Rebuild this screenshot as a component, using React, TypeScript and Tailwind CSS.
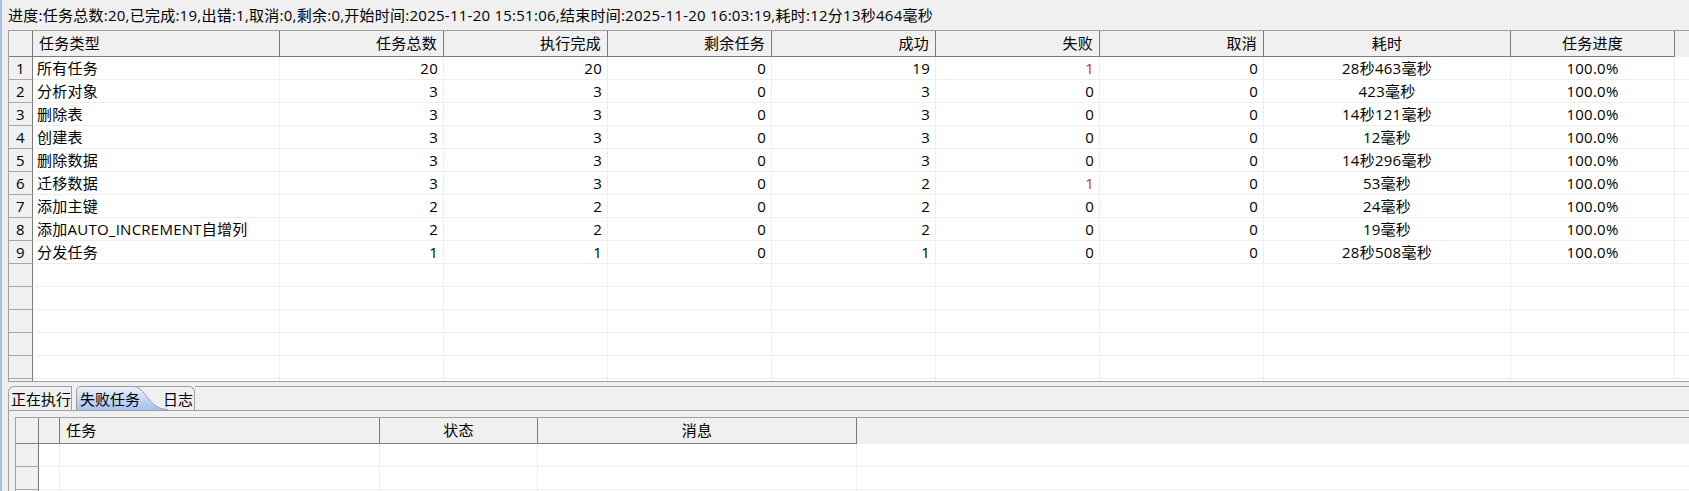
import React from "react";

type Col = { title: string; w: number; align: "left" | "right" | "center" };

const mainCols: Col[] = [
  { title: "任务类型", w: 247, align: "left" },
  { title: "任务总数", w: 164, align: "right" },
  { title: "执行完成", w: 164, align: "right" },
  { title: "剩余任务", w: 164, align: "right" },
  { title: "成功", w: 164, align: "right" },
  { title: "失败", w: 164, align: "right" },
  { title: "取消", w: 164, align: "right" },
  { title: "耗时", w: 247, align: "center" },
  { title: "任务进度", w: 164, align: "center" },
];

const rows: (string | number)[][] = [
  ["所有任务", 20, 20, 0, 19, 1, 0, "28秒463毫秒", "100.0%"],
  ["分析对象", 3, 3, 0, 3, 0, 0, "423毫秒", "100.0%"],
  ["删除表", 3, 3, 0, 3, 0, 0, "14秒121毫秒", "100.0%"],
  ["创建表", 3, 3, 0, 3, 0, 0, "12毫秒", "100.0%"],
  ["删除数据", 3, 3, 0, 3, 0, 0, "14秒296毫秒", "100.0%"],
  ["迁移数据", 3, 3, 0, 2, 1, 0, "53毫秒", "100.0%"],
  ["添加主键", 2, 2, 0, 2, 0, 0, "24毫秒", "100.0%"],
  ["添加AUTO_INCREMENT自增列", 2, 2, 0, 2, 0, 0, "19毫秒", "100.0%"],
  ["分发任务", 1, 1, 0, 1, 0, 0, "28秒508毫秒", "100.0%"],
];

const subCols: Col[] = [
  { title: "", w: 21, align: "left" },
  { title: "任务", w: 320, align: "left" },
  { title: "状态", w: 158, align: "center" },
  { title: "消息", w: 319, align: "center" },
];

const alignHead = {
  left: "justify-start pl-[6px]",
  right: "justify-end pr-[6px]",
  center: "justify-center",
};

const alignCell = {
  left: "justify-start pl-[4px]",
  right: "justify-end pr-[5px]",
  center: "justify-center",
};

const HeaderRow = ({ cols, numW }: { cols: Col[]; numW: number }) => (
  <div className="flex h-[26px]">
    <div
      style={{ width: numW }}
      className="h-full shrink-0 border-r border-b border-[#7c7c7c] bg-[#f0f0f0]"
    />
    {cols.map((c, i) => (
      <div
        key={i}
        style={{ width: c.w }}
        className={`flex h-full shrink-0 items-center border-r border-b border-[#7c7c7c] bg-[#f0f0f0] ${alignHead[c.align]}`}
      >
        {c.title}
      </div>
    ))}
    <div className="h-full flex-1 bg-[#f0f0f0]" />
  </div>
);

const BodyRow = ({
  num,
  cols,
  numW,
  values,
}: {
  num?: number;
  cols: Col[];
  numW: number;
  values?: (string | number)[];
}) => (
  <div className="flex h-[23px]">
    <div
      style={{ width: numW }}
      className="flex h-full shrink-0 items-center justify-center border-r border-r-[#7c7c7c] border-b border-b-[#a8a8a8] bg-[#f0f0f0]"
    >
      {num}
    </div>
    {cols.map((c, i) => {
      const v = values ? values[i] : "";
      const red = values && i === 5 && v === 1;
      return (
        <div
          key={i}
          style={{ width: c.w }}
          className={`flex h-full shrink-0 items-center whitespace-nowrap border-r border-b border-[#eeeeee] ${alignCell[c.align]} ${red ? "text-[#c4301c]" : ""}`}
        >
          {v}
        </div>
      );
    })}
    <div className="h-full flex-1 border-b border-[#eeeeee]" />
  </div>
);

const MainTable = () => (
  <div className="ml-[6px] h-[352px] w-[1700px] overflow-hidden border border-[#a0a0a0] bg-white">
    <HeaderRow cols={mainCols} numW={24} />
    {Array.from({ length: 15 }).map((_, i) => (
      <BodyRow
        key={i}
        num={i < rows.length ? i + 1 : undefined}
        cols={mainCols}
        numW={24}
        values={rows[i]}
      />
    ))}
  </div>
);

const Tabs = () => (
  <div className="ml-[6px] flex h-[24px] items-stretch whitespace-nowrap tracking-normal">
    <div className="flex w-[64px] shrink-0 items-center rounded-tl-[6px] border-l border-t border-r border-[#a0a0a0] pl-[2px] pt-[2px]">
      正在执行
    </div>
    <div className="w-[4px] shrink-0" />
    <div className="relative z-10 flex w-[92px] shrink-0 items-center pl-[4px] pt-[2px]">
      <svg
        className="absolute inset-0"
        width="92"
        height="24"
        viewBox="0 0 92 24"
      >
        <defs>
          <linearGradient id="tabg" x1="0" y1="0" x2="0" y2="1">
            <stop offset="0" stopColor="#eef2f9" />
            <stop offset="1" stopColor="#a3c0f0" />
          </linearGradient>
        </defs>
        <path
          d="M0.5 24 L0.5 5 Q0.5 0.5 5 0.5 L57 0.5 C70 0.5 72 23.5 92 23.5 L92 24 Z"
          fill="url(#tabg)"
        />
        <path
          d="M0.5 24 L0.5 5 Q0.5 0.5 5 0.5 L57 0.5 C70 0.5 72 23.5 92 23.5"
          fill="none"
          stroke="#9c9c9c"
        />
      </svg>
      <span className="relative">失败任务</span>
    </div>
    <div className="-ml-[35px] flex w-[62px] shrink-0 items-center rounded-tr-[6px] border-t border-r border-[#a0a0a0] pl-[30px] pt-[2px]">
      日志
    </div>
    <div className="flex-1 border-t border-[#a0a0a0]" />
  </div>
);

const SubTable = () => (
  <div className="ml-[6px] border-l border-t border-[#a0a0a0] pl-[6px] pt-[6px]">
    <div className="w-[1700px] border-l border-t border-[#a0a0a0] bg-white">
      <HeaderRow cols={subCols} numW={23} />
      {Array.from({ length: 3 }).map((_, i) => (
        <BodyRow key={i} cols={subCols} numW={23} />
      ))}
    </div>
  </div>
);

export default function App() {
  return (
    <div className="h-[491px] w-[1689px] overflow-hidden border-l-2 border-[#a8c0dd] bg-[#f0f0f0] font-['Open_Sans','Noto_Sans_CJK_SC',sans-serif] text-[15px] leading-none tracking-[0.25px] text-black">
      <div className="flex h-[30px] items-center whitespace-nowrap pl-[6px]">
        进度:任务总数:20,已完成:19,出错:1,取消:0,剩余:0,开始时间:2025-11-20
        15:51:06,结束时间:2025-11-20 16:03:19,耗时:12分13秒464毫秒
      </div>
      <MainTable />
      <div className="h-[4px]" />
      <Tabs />
      <SubTable />
    </div>
  );
}
